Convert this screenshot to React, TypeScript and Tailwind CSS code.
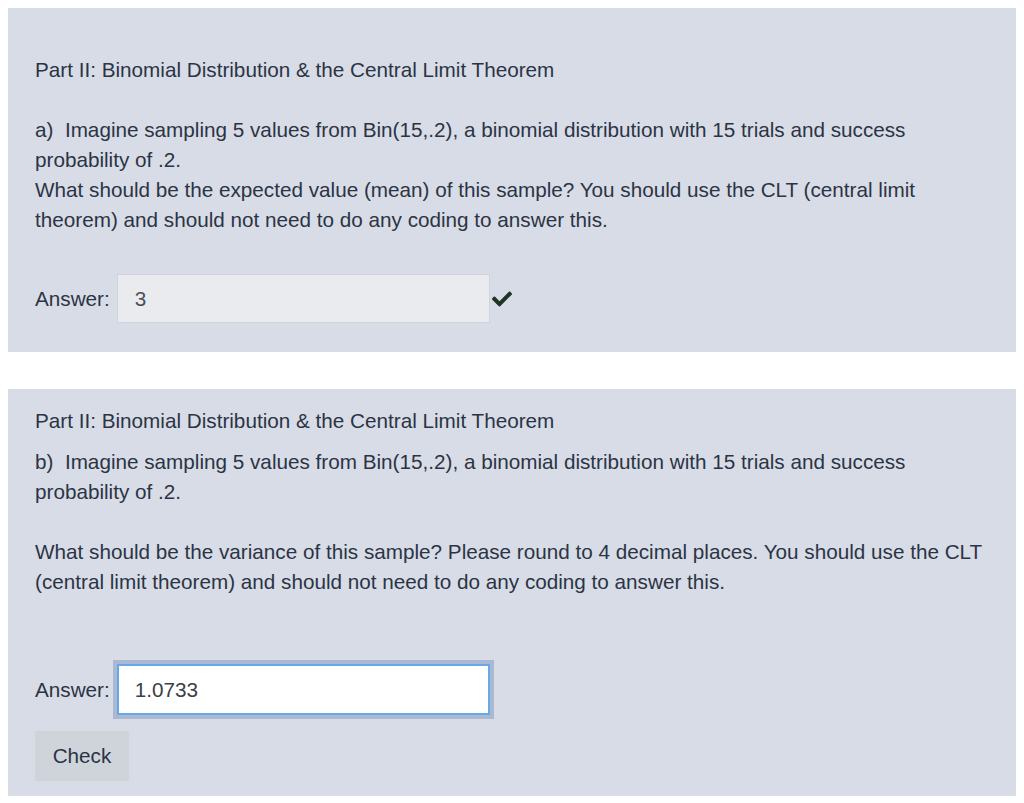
import { useState } from 'react'

function Check() {
  return (
    <svg viewBox="0 0 512 512" className="w-[20px] h-[20px] fill-[#1f3524]">
      <path d="M173.9 439.4l-166.4-166.4c-10-10-10-26.2 0-36.2l36.2-36.2c10-10 26.2-10 36.2 0L192 312.7 432.1 72.6c10-10 26.2-10 36.2 0l36.2 36.2c10 10 10 26.2 0 36.2l-294.4 294.4c-10 10-26.2 10-36.2 0z" />
    </svg>
  )
}

export default function App() {
  const [answer, setAnswer] = useState('1.0733')

  return (
    <div className="min-h-screen bg-white px-[8px] pt-[8px] text-[20.7px] leading-[30px] text-[#2b3445] font-['Liberation_Sans',Arial,sans-serif]">
      <div className="bg-[#d8dce6] px-[27px] pt-[47px] pb-[29px]">
        <p>Part II: Binomial Distribution &amp; the Central Limit Theorem</p>
        <div className="mt-[30px]">
          <p>
            a)&nbsp; Imagine sampling 5 values from Bin(15,.2), a binomial distribution with 15 trials and success
            <br />
            probability of .2.
          </p>
          <p>
            What should be the expected value (mean) of this sample? You should use the CLT (central limit
            <br />
            theorem) and should not need to do any coding to answer this.
          </p>
        </div>
        <div className="mt-[39px] flex items-center">
          <span className="mr-[7px]">Answer:</span>
          <div className="w-[373px] h-[49px] bg-[#e9ebef] border border-[#cfd4dd] flex items-center px-[17px] text-[#4a4f58]">
            3
          </div>
          <span className="ml-[2px]">
            <Check />
          </span>
        </div>
      </div>

      <div className="mt-[37px] bg-[#d8dce6] px-[27px] pt-[17px] pb-[15px]">
        <p>Part II: Binomial Distribution &amp; the Central Limit Theorem</p>
        <div className="mt-[11px]">
          <p>
            b)&nbsp; Imagine sampling 5 values from Bin(15,.2), a binomial distribution with 15 trials and success
            <br />
            probability of .2.
          </p>
          <p className="mt-[30px]">
            What should be the variance of this sample? Please round to 4 decimal places. You should use the CLT
            <br />
            (central limit theorem) and should not need to do any coding to answer this.
          </p>
        </div>
        <div className="mt-[67px] flex items-center">
          <span className="mr-[7px]">Answer:</span>
          <input
            autoFocus
            value={answer}
            onChange={e => setAnswer(e.target.value)}
            className="w-[373px] h-[51px] bg-white border-2 border-[#68a6ee] outline-[4px] outline-solid outline-[#aab9d0] px-[16px] text-[#3a3f48] font-['Liberation_Sans',Arial,sans-serif] text-[20.7px]"
          />
        </div>
        <button className="mt-[16px] w-[94px] h-[50px] bg-[#cfd4da] text-[#2b3445] text-[20.7px]">
          Check
        </button>
      </div>
    </div>
  )
}
